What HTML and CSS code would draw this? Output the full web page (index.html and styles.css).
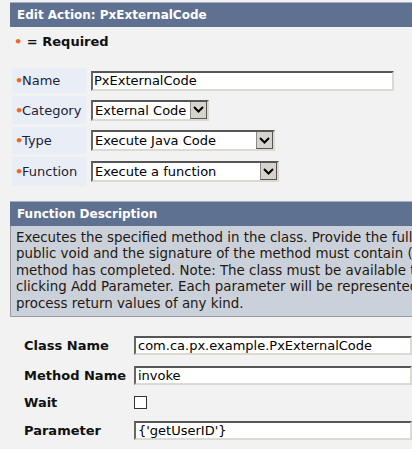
FILE: index.html
```html
<!DOCTYPE html>
<html>
<head>
<meta charset="utf-8">
<link rel="stylesheet" href="styles.css">
</head>
<body>
<div class="page">
  <div class="bar">Edit Action: PxExternalCode</div>
  <div class="required"><span class="dot">•</span> = Required</div>

  <div class="form">
    <div class="lbl"><span class="dot">•</span>Name</div>
    <div class="field"><div class="input w-name">PxExternalCode</div></div>

    <div class="lbl"><span class="dot">•</span>Category</div>
    <div class="field">
      <div class="select w-cat"><span class="val">External Code</span><span class="btn"><svg width="11" height="7" viewBox="0 0 11 7"><polyline points="1,1 5.5,5.5 10,1" fill="none" stroke="#000" stroke-width="2"/></svg></span></div>
    </div>

    <div class="lbl"><span class="dot">•</span>Type</div>
    <div class="field">
      <div class="select w-type"><span class="val">Execute Java Code</span><span class="btn"><svg width="11" height="7" viewBox="0 0 11 7"><polyline points="1,1 5.5,5.5 10,1" fill="none" stroke="#000" stroke-width="2"/></svg></span></div>
    </div>

    <div class="lbl"><span class="dot">•</span>Function</div>
    <div class="field">
      <div class="select w-func"><span class="val">Execute a function</span><span class="btn"><svg width="11" height="7" viewBox="0 0 11 7"><polyline points="1,1 5.5,5.5 10,1" fill="none" stroke="#000" stroke-width="2"/></svg></span></div>
    </div>
  </div>

  <div class="desc">
    <div class="bar desc-bar">Function Description</div>
    <div class="desc-body">
      <p class="line">Executes the specified method in the class. Provide the fully qualified class name. The method must be</p>
      <p class="line">public void and the signature of the method must contain (Object[] params). Wait until the</p>
      <p class="line">method has completed. Note: The class must be available to the server. Parameters are added by</p>
      <p class="line">clicking Add Parameter. Each parameter will be represented as a string. The method cannot</p>
      <p class="line">process return values of any kind.</p>
    </div>
  </div>

  <div class="params">
    <div class="plbl">Class Name</div>
    <div class="pfield"><div class="input wide">com.ca.px.example.PxExternalCode</div></div>

    <div class="plbl">Method Name</div>
    <div class="pfield"><div class="input wide">invoke</div></div>

    <div class="plbl">Wait</div>
    <div class="pfield"><span class="check"></span></div>

    <div class="plbl">Parameter</div>
    <div class="pfield"><div class="input wide">{'getUserID'}</div></div>
  </div>
</div>
</body>
</html>
```

FILE: styles.css
```css
html, body {
  margin: 0;
  padding: 0;
  background: #f2f2f2;
  overflow: hidden;
}
body {
  font-family: "DejaVu Sans", Verdana, sans-serif;
  font-size: 13px;
  color: #1c1c1c;
}
.page {
  width: 412px;
  padding-top: 2px;
  overflow: hidden;
}
.bar {
  margin-left: 10px;
  height: 24px;
  line-height: 24px;
  background: #5f7191;
  border-top: 1px solid #a6b0c4;
  color: #fff;
  font-weight: bold;
  font-size: 12px;
  padding-left: 7px;
}
.required {
  margin-top: 7px;
  padding-left: 14px;
  font-weight: bold;
  line-height: 16px;
  color: #111;
}
.dot {
  color: #f26522;
  font-weight: bold;
  display: inline-block;
  width: 7px;
}
.required .dot {
  width: auto;
}
.form {
  margin-top: 18px;
  margin-left: 12px;
  display: grid;
  grid-template-columns: 74px auto;
  grid-template-rows: 25px 28px 27px 29px;
  row-gap: 3px;
  column-gap: 5px;
}
.lbl {
  background: #e9eef6;
  display: flex;
  align-items: center;
  padding-left: 3px;
  color: #1a1f3d;
}
.field {
  display: flex;
  align-items: center;
}
.input {
  box-sizing: border-box;
  height: 20px;
  line-height: 16px;
  background: #fff;
  border-top: 2px solid #555;
  border-left: 2px solid #666;
  border-right: 2px solid #dcd9d2;
  border-bottom: 2px solid #dcd9d2;
  padding-left: 1px;
  color: #000;
  white-space: nowrap;
  overflow: hidden;
}
.w-name { width: 303px; }
.select {
  box-sizing: border-box;
  height: 21px;
  display: flex;
  align-items: stretch;
  background: #fff;
  border-top: 2px solid #555;
  border-left: 2px solid #666;
  border-right: 2px solid #dcd9d2;
  border-bottom: 2px solid #dcd9d2;
  color: #000;
}
.select .val {
  flex: 1;
  padding-left: 2px;
  line-height: 17px;
  white-space: nowrap;
  overflow: hidden;
}
.select .btn {
  box-sizing: border-box;
  width: 17px;
  background: #d6d3cc;
  border-left: 1px solid #8a8a8a;
  border-right: 1px solid #555;
  border-bottom: 1px solid #555;
  display: flex;
  align-items: center;
  justify-content: center;
}
.w-cat { width: 118px; }
.w-type { width: 184px; }
.w-func { width: 188px; }

.desc {
  margin-top: 15px;
}
.desc-body {
  margin-left: 10px;
  background: #cbd1db;
  border-left: 1px solid #9a9a9a;
  border-bottom: 1px solid #9a9a9a;
  padding: 4px 0 4px 5px;
  color: #24180c;
  font-size: 13.4px;
  overflow: hidden;
}
.line {
  margin: 0;
  white-space: nowrap;
  line-height: 16.4px;
}

.params {
  margin-top: 12px;
  display: grid;
  grid-template-columns: 110px auto;
  grid-template-rows: 32px 29px 25px 30px;
  padding-left: 24px;
}
.plbl {
  font-weight: bold;
  color: #111;
  display: flex;
  align-items: center;
}
.pfield {
  display: flex;
  align-items: center;
  overflow: hidden;
}
.wide { width: 300px; height: 19px; padding-left: 2px; line-height: 15px; }
.check {
  box-sizing: border-box;
  width: 13px;
  height: 13px;
  background: #fff;
  border: 1px solid #333;
}
```
